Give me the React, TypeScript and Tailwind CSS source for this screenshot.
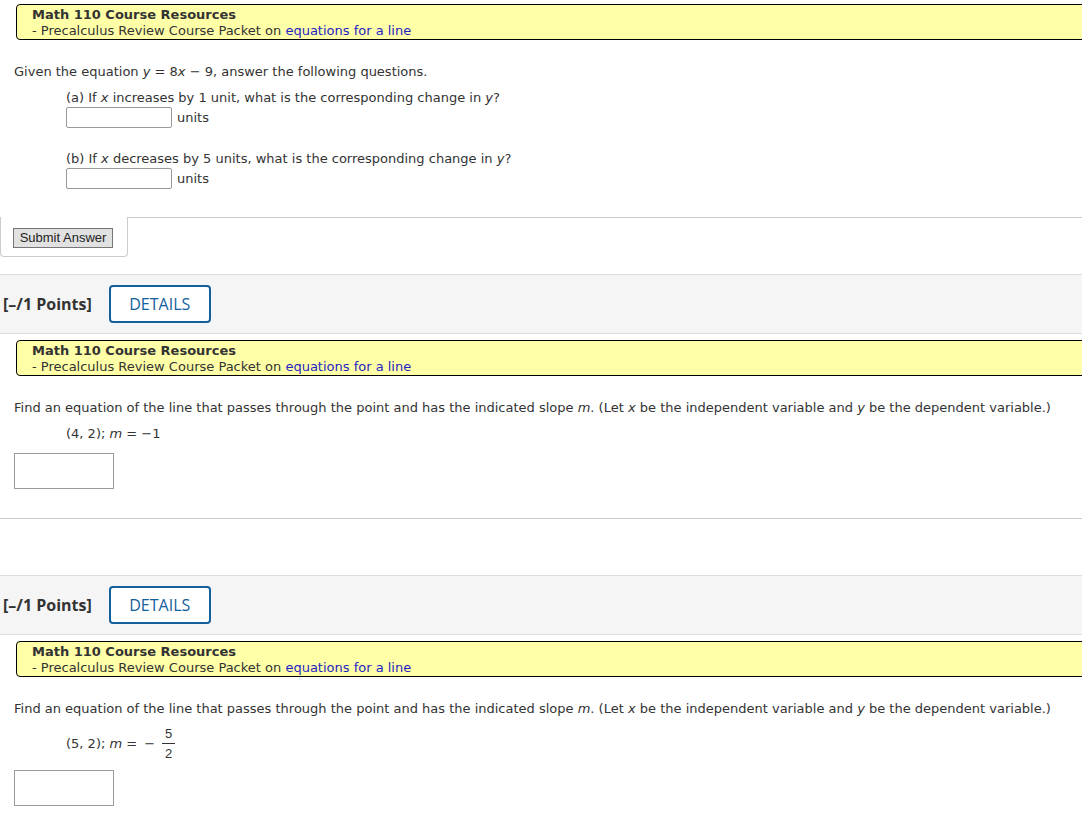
import React from "react";

function Resources() {
  return (
    <div className="ml-[16px] mr-[-20px] h-[36px] rounded-l-[4px] border border-black bg-[#ffffa8] pl-[15px] pt-[2px] leading-[16px]">
      <div className="font-bold text-[#333]">Math 110 Course Resources</div>
      <div className="text-[#333]">
        - Precalculus Review Course Packet on{" "}
        <a href="#" className="text-[#1f1fc4]">equations for a line</a>
      </div>
    </div>
  );
}

function PointsBar() {
  return (
    <div className="flex h-[60px] items-center border-y border-[#dddddd] bg-[#f5f5f5] font-['Open_Sans',sans-serif]">
      <div className="ml-[3px] text-[16px] font-bold text-[#333]">[–/1 Points]</div>
      <button
        type="button"
        className="ml-[17px] h-[38px] w-[102px] rounded-[4px] border-2 border-[#12609c] bg-white text-[16px] text-[#12609c]"
      >
        DETAILS
      </button>
    </div>
  );
}

function V({ children }: { children: React.ReactNode }) {
  return <i>{children}</i>;
}

function Prompt() {
  return (
    <div className="pl-[14px]">
      Find an equation of the line that passes through the point and has the indicated slope <V>m</V>. (Let{" "}
      <V>x</V> be the independent variable and <V>y</V> be the dependent variable.)
    </div>
  );
}

export default function App() {
  return (
    <div className="w-full overflow-hidden bg-white pb-[30px] font-['DejaVu_Sans',Verdana,sans-serif] text-[13px] leading-[16px] text-[#333]">
      {/* question 1 */}
      <div className="pt-[4px]">
        <Resources />
      </div>

      <div className="mt-[24px] pl-[14px]">
        Given the equation <V>y</V> = 8<V>x</V> − 9, answer the following questions.
      </div>

      <div className="pl-[66px]">
        <div className="mt-[10px]">
          (a) If <V>x</V> increases by 1 unit, what is the corresponding change in <V>y</V>?
        </div>
        <div className="mt-[1px] flex items-center">
          <input className="h-[21px] w-[106px] rounded-[2px] border border-[#999] bg-white" />
          <span className="ml-[5px]">units</span>
        </div>

        <div className="mt-[23px]">
          (b) If <V>x</V> decreases by 5 units, what is the corresponding change in <V>y</V>?
        </div>
        <div className="mt-[1px] flex items-center">
          <input className="h-[21px] w-[106px] rounded-[2px] border border-[#999] bg-white" />
          <span className="ml-[5px]">units</span>
        </div>
      </div>

      {/* submit */}
      <div className="mt-[28px] flex">
        <div className="h-[40px] w-[128px] shrink-0 rounded-b-[4px] border-x border-b border-[#cccccc] pl-[12px] pt-[11px]">
          <button
            type="button"
            className="block h-[20px] w-[100px] border border-[#767676] bg-[#e1e1e1] font-['Liberation_Sans',Arial,sans-serif] text-[13px] leading-[18px] text-[#222]"
          >
            Submit Answer
          </button>
        </div>
        <div className="flex-1 border-t border-[#cccccc]" />
      </div>

      {/* question 2 */}
      <div className="mt-[17px]">
        <PointsBar />
      </div>
      <div className="mt-[6px]">
        <Resources />
      </div>
      <div className="mt-[24px]">
        <Prompt />
      </div>
      <div className="mt-[10px] pl-[66px]">
        (4, 2); <V>m</V> = −1
      </div>
      <div className="mt-[11px] pl-[14px]">
        <input className="block h-[36px] w-[100px] border border-[#999] bg-white" />
      </div>
      <div className="mt-[29px] border-b border-[#cccccc]" />

      {/* question 3 */}
      <div className="mt-[56px]">
        <PointsBar />
      </div>
      <div className="mt-[6px]">
        <Resources />
      </div>
      <div className="mt-[24px]">
        <Prompt />
      </div>
      <div className="mt-[7px] flex items-center pl-[66px]">
        <span className="pt-[1px]">
          (5, 2); <V>m</V> = <span className="ml-[3px]">−</span>
        </span>
        <span className="ml-[7px] inline-flex flex-col items-center font-['Liberation_Sans',Arial,sans-serif] text-[13px] leading-[19px]">
          <span className="px-[2px]">5</span>
          <span className="h-px w-[13px] bg-[#333]" />
          <span className="px-[2px]">2</span>
        </span>
      </div>
      <div className="mt-[7px] pl-[14px]">
        <input className="block h-[36px] w-[100px] border border-[#999] bg-white" />
      </div>
    </div>
  );
}
